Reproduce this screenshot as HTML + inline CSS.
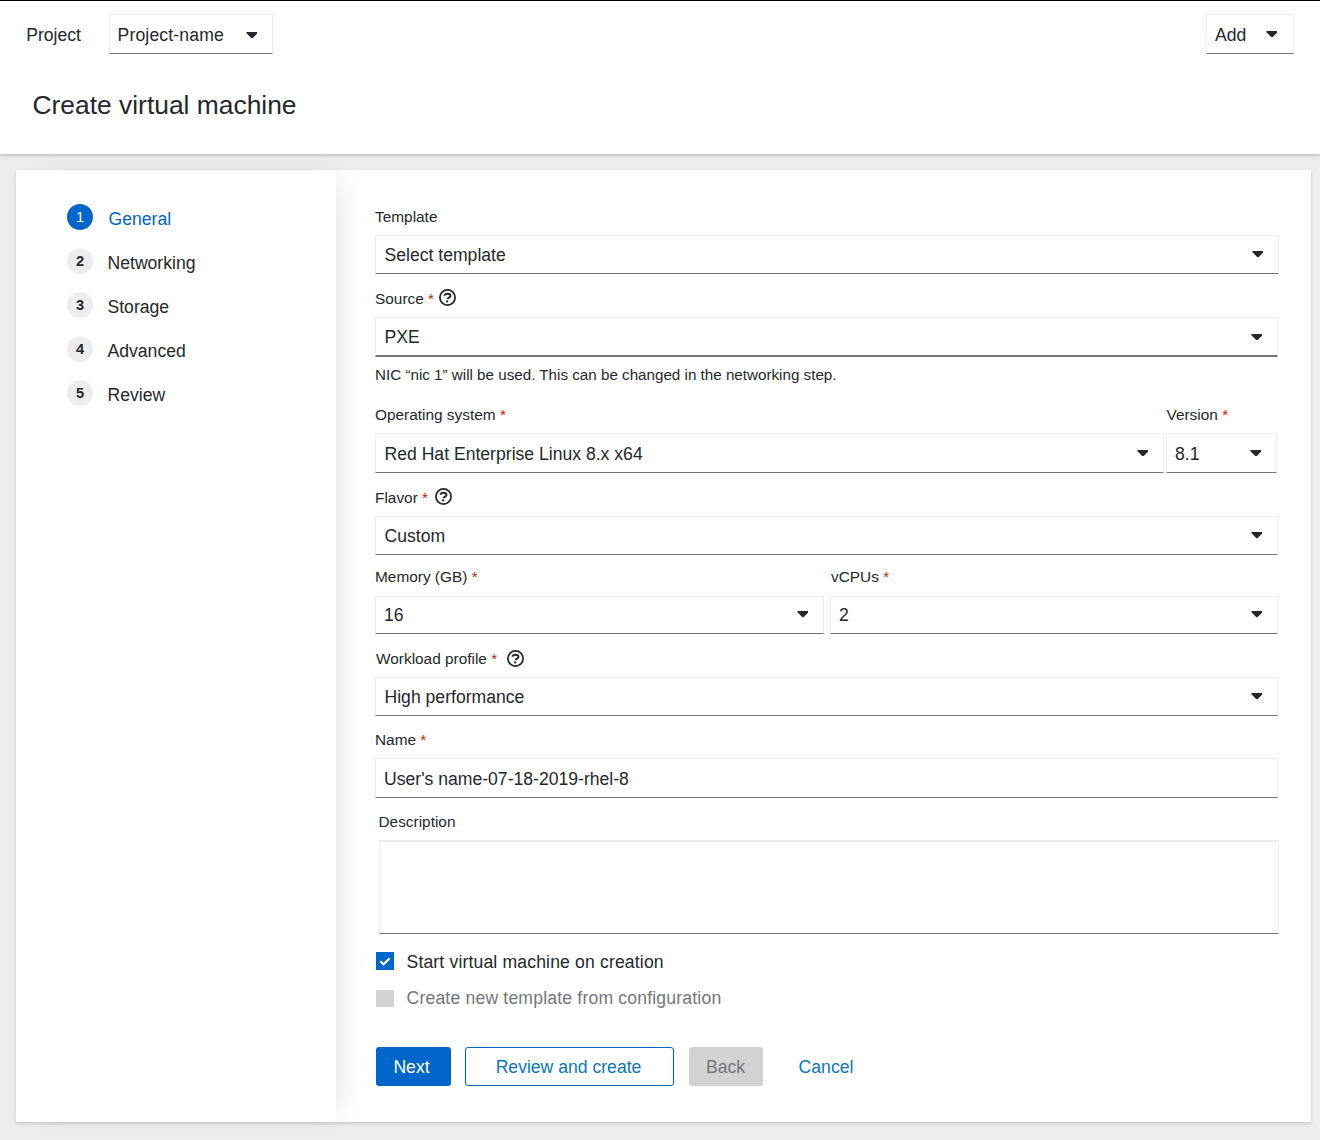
<!DOCTYPE html>
<html><head><meta charset="utf-8">
<style>
html,body{margin:0;padding:0}
body{width:1320px;height:1140px;position:relative;overflow:hidden;background:#ededed;font-family:"Liberation Sans",sans-serif;color:#24282d}
.a{position:absolute}
.t{position:absolute;white-space:nowrap;line-height:1}
.b{font-size:17.6px;margin-top:1px}
.l{font-size:15.4px}
.hdr{left:0;top:0;width:1320px;height:154px;background:#fff;box-shadow:0 2px 3px rgba(0,0,0,.18);z-index:2}
.topline{left:0;top:0;width:1320px;height:1px;background:#000}
.card{left:16px;top:170px;width:1295px;height:952px;background:#fff;box-shadow:0 2px 3px rgba(0,0,0,.12),0 0 2px rgba(0,0,0,.06)}
.nav{left:0;top:0;width:320px;height:952px;background:#fff;box-shadow:12px 0 28px -12px rgba(0,0,0,.14);z-index:1}
.sel{position:absolute;box-sizing:border-box;border:1px solid #ededed;border-bottom:1px solid #72767b;background:#fff}
.car{position:absolute;width:11.4px;height:6.5px}
.req{color:#c9190b}
.num{position:absolute;left:51px;width:26px;height:26px;border-radius:50%;background:#ededed;font-size:14.6px;font-weight:bold;line-height:27px;text-align:center;color:#24282d}
.hi{position:absolute;width:17px;height:17px}
.btn{position:absolute;top:1047px;height:39px;box-sizing:border-box;border-radius:3px;font-size:17.6px;line-height:37px;padding-top:2px;text-align:center;white-space:nowrap}
</style></head><body>
<svg width="0" height="0" style="position:absolute">
<defs>
<symbol id="caret" viewBox="4 192 300 168"><path d="M31.3 192h257.3c17.8 0 26.7 21.5 14.1 34.1L174.1 354.8c-7.8 7.8-20.5 7.8-28.3 0L17.2 226.1C4.6 213.5 13.5 192 31.3 192z" fill="#24282d"/></symbol>
<symbol id="help" viewBox="0 0 17 17"><circle cx="8.5" cy="8.5" r="7.6" fill="none" stroke="#24282d" stroke-width="1.75"/><path d="M5.4 6.7C5.8 5.3 7 4.8 8.5 4.8C10.4 4.8 11.5 5.8 11.5 7C11.5 8.5 9.2 8.6 8.4 10.1" fill="none" stroke="#24282d" stroke-width="1.9" stroke-linecap="butt"/><circle cx="8.2" cy="12.4" r="1.15" fill="#24282d"/></symbol>
</defs></svg>

<!-- HEADER -->
<div class="a hdr">
  <div class="a topline"></div>
  <div class="t b" style="left:26.2px;top:26.2px">Project</div>
  <div class="sel" style="left:109px;top:14px;width:164px;height:40px"></div>
  <div class="t b" style="left:117.5px;top:26.1px;letter-spacing:.15px">Project-name</div>
  <svg class="car" style="left:246px;top:31.5px"><use href="#caret"/></svg>
  <div class="sel" style="left:1206px;top:14px;width:88px;height:40px"></div>
  <div class="t b" style="left:1215px;top:26px">Add</div>
  <svg class="car" style="left:1266px;top:30.7px"><use href="#caret"/></svg>
  <div class="t" style="left:32.5px;top:91.6px;font-size:26.4px">Create virtual machine</div>
</div>

<!-- CARD -->
<div class="a card">
  <div class="a nav">
    <div class="num" style="top:34px;background:#06c;color:#fff;font-weight:normal">1</div>
    <div class="t b" style="left:92.5px;top:40px;color:#06c">General</div>
    <div class="num" style="top:78px">2</div>
    <div class="t b" style="left:91.5px;top:84px">Networking</div>
    <div class="num" style="top:122px">3</div>
    <div class="t b" style="left:91.5px;top:128px">Storage</div>
    <div class="num" style="top:166px">4</div>
    <div class="t b" style="left:91.5px;top:172px">Advanced</div>
    <div class="num" style="top:210px">5</div>
    <div class="t b" style="left:91.5px;top:216px">Review</div>
  </div>
</div>

<!-- FORM -->
<div class="t l" style="left:375px;top:209px">Template</div>
<div class="sel" style="left:375px;top:235px;width:904px;height:39px"></div>
<div class="t b" style="left:384.5px;top:245.8px">Select template</div>
<svg class="car" style="left:1252px;top:251px"><use href="#caret"/></svg>

<div class="t l" style="left:375px;top:290.6px">Source <span class="req">*</span></div>
<svg class="hi" style="left:439px;top:288.9px"><use href="#help"/></svg>
<div class="sel" style="left:375px;top:317px;width:903px;height:40px;border-bottom-width:2px"></div>
<div class="t b" style="left:384.5px;top:328px">PXE</div>
<svg class="car" style="left:1251px;top:333.7px"><use href="#caret"/></svg>
<div class="t" style="left:375px;top:366.8px;font-size:15.2px">NIC “nic 1” will be used. This can be changed in the networking step.</div>

<div class="t l" style="left:375px;top:406.8px">Operating system <span class="req">*</span></div>
<div class="t l" style="left:1166.5px;top:406.8px">Version <span class="req">*</span></div>
<div class="sel" style="left:375px;top:433px;width:789px;height:40px"></div>
<div class="t b" style="left:384.5px;top:445.2px">Red Hat Enterprise Linux 8.x x64</div>
<svg class="car" style="left:1137px;top:449.7px"><use href="#caret"/></svg>
<div class="sel" style="left:1166px;top:433px;width:111px;height:40px"></div>
<div class="t b" style="left:1175px;top:445px">8.1</div>
<svg class="car" style="left:1250px;top:449.7px"><use href="#caret"/></svg>

<div class="t l" style="left:375px;top:489.7px">Flavor <span class="req">*</span></div>
<svg class="hi" style="left:435px;top:488.2px"><use href="#help"/></svg>
<div class="sel" style="left:375px;top:516px;width:903px;height:39px"></div>
<div class="t b" style="left:384.5px;top:527.2px">Custom</div>
<svg class="car" style="left:1251px;top:532px"><use href="#caret"/></svg>

<div class="t l" style="left:375px;top:568.8px">Memory (GB) <span class="req">*</span></div>
<div class="t l" style="left:831px;top:568.8px">vCPUs <span class="req">*</span></div>
<div class="sel" style="left:375px;top:595.5px;width:449px;height:38.5px"></div>
<div class="t b" style="left:384px;top:605.8px">16</div>
<svg class="car" style="left:797px;top:611px"><use href="#caret"/></svg>
<div class="sel" style="left:830px;top:595.5px;width:448px;height:38.5px"></div>
<div class="t b" style="left:839px;top:605.8px">2</div>
<svg class="car" style="left:1251px;top:611px"><use href="#caret"/></svg>

<div class="t l" style="left:376px;top:651.1px">Workload profile <span class="req">*</span></div>
<svg class="hi" style="left:507px;top:649.9px"><use href="#help"/></svg>
<div class="sel" style="left:375px;top:677px;width:903px;height:39px"></div>
<div class="t b" style="left:384.5px;top:688.1px">High performance</div>
<svg class="car" style="left:1251px;top:693px"><use href="#caret"/></svg>

<div class="t l" style="left:375px;top:732.1px">Name <span class="req">*</span></div>
<div class="sel" style="left:375px;top:758px;width:903px;height:40px"></div>
<div class="t b" style="left:384px;top:769.9px">User's name-07-18-2019-rhel-8</div>

<div class="t l" style="left:378.5px;top:814px">Description</div>
<div class="sel" style="left:379px;top:840px;width:900px;height:94px;border-top-width:2px"></div>

<div class="a" style="left:376px;top:952px;width:18px;height:18px;background:#06c"><svg width="18" height="18" style="position:absolute;left:0;top:0"><path d="M4.3 9.2 L7.6 12.3 L13.6 6.2" stroke="#fff" stroke-width="2" fill="none"/></svg></div>
<div class="t b" style="left:406.5px;top:952.8px;letter-spacing:.15px">Start virtual machine on creation</div>
<div class="a" style="left:376px;top:989.5px;width:18px;height:17.5px;background:#d2d2d2"></div>
<div class="t b" style="left:406.5px;top:988.9px;color:#737679;letter-spacing:.18px">Create new template from configuration</div>

<div class="btn" style="left:376px;width:75px;background:#06c;color:#fff;padding-right:4px">Next</div>
<div class="btn" style="left:465px;width:209px;border:1px solid #06c;color:#0a76be;padding-right:2px;padding-top:1px">Review and create</div>
<div class="btn" style="left:689px;width:74px;background:#d2d2d2;color:#737679;padding-right:1px">Back</div>
<div class="btn" style="left:786px;width:80px;color:#0a76be">Cancel</div>
</body></html>
